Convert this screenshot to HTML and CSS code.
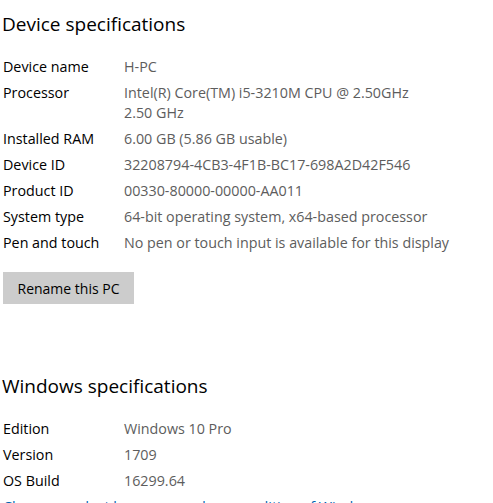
FILE: index.html
```html
<!DOCTYPE html>
<html lang="en">
<head>
<meta charset="utf-8">
<title>About</title>
<link rel="stylesheet" href="styles.css">
</head>
<body>
<main class="page">
  <section class="section">
    <h2 class="heading">Device specifications</h2>
    <dl class="specs">
      <dt>Device name</dt><dd>H-PC</dd>
      <dt>Processor</dt><dd>Intel(R) Core(TM) i5-3210M CPU @ 2.50GHz<br>2.50 GHz</dd>
      <dt>Installed RAM</dt><dd>6.00 GB (5.86 GB usable)</dd>
      <dt>Device ID</dt><dd>32208794-4CB3-4F1B-BC17-698A2D42F546</dd>
      <dt>Product ID</dt><dd>00330-80000-00000-AA011</dd>
      <dt>System type</dt><dd>64-bit operating system, x64-based processor</dd>
      <dt>Pen and touch</dt><dd>No pen or touch input is available for this display</dd>
    </dl>
    <button class="btn" type="button">Rename this PC</button>
  </section>
  <section class="section section-win">
    <h2 class="heading">Windows specifications</h2>
    <dl class="specs">
      <dt>Edition</dt><dd>Windows 10 Pro</dd>
      <dt>Version</dt><dd>1709</dd>
      <dt>OS Build</dt><dd>16299.64</dd>
    </dl>
    <a class="link" href="#">Change product key or upgrade your edition of Windows</a>
  </section>
</main>
</body>
</html>
```

FILE: styles.css
```css
html, body {
  margin: 0;
  padding: 0;
  background: #fff;
}
body {
  font-family: "Open Sans", "Noto Sans", "Liberation Sans", sans-serif;
  font-size: 14.3px;
  color: #000;
  overflow: hidden;
}
.page {
  padding: 10px 0 0 3px;
}
.section {
  display: flex;
  flex-direction: column;
  align-items: flex-start;
}
.heading {
  margin: 0 0 0 -1px;
  font-size: 19px;
  font-weight: 400;
  line-height: 28px;
  color: #000;
}
.specs {
  margin: 19px 0 0 0;
  display: grid;
  grid-template-columns: 121px auto;
  row-gap: 6px;
  line-height: 20px;
}
.specs dt {
  margin: 0;
  color: #000;
}
.specs dd {
  margin: 0;
  color: #5d5d5d;
}
.btn {
  margin-top: 19px;
  width: 131px;
  height: 32px;
  border: none;
  background: #cccccc;
  font-family: inherit;
  font-size: 14px;
  color: #000;
  padding: 0;
}
.section-win {
  margin-top: 68px;
}
.link {
  margin-top: 6px;
  line-height: 20px;
  color: #0063b1;
  text-decoration: none;
  white-space: nowrap;
}
```
